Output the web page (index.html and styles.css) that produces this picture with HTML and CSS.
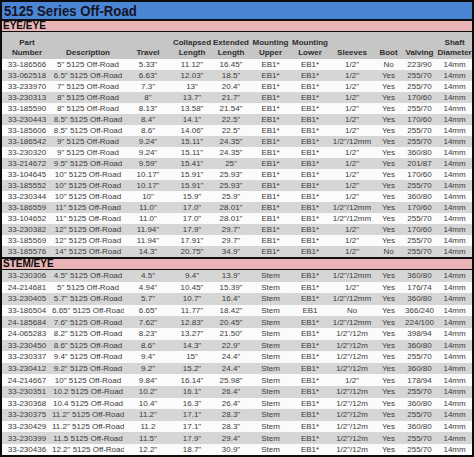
FILE: index.html
```html
<!DOCTYPE html>
<html>
<head>
<meta charset="utf-8">
<title>5125 Series Off-Road</title>
<link rel="stylesheet" href="styles.css">
</head>
<body>
<div class="sheet">
  <div class="title"><span class="title-text">5125 Series Off-Road</span></div>
  <table class="grid">
    <colgroup>
      <col class="c-part"><col class="c-desc"><col class="c-travel"><col class="c-coll"><col class="c-ext"><col class="c-up"><col class="c-low"><col class="c-sleeve"><col class="c-boot"><col class="c-valv"><col class="c-shaft">
    </colgroup>
    <thead>
      <tr class="band band-first"><td colspan="11">EYE/EYE</td></tr>
      <tr class="head">
        <th>Part<br>Number</th><th>Description</th><th>Travel</th><th>Collapsed<br>Length</th><th>Extended<br>Length</th><th>Mounting<br>Upper</th><th>Mounting<br>Lower</th><th>Sleeves</th><th>Boot</th><th>Valving</th><th>Shaft<br>Diameter</th>
      </tr>
    </thead>
    <tbody class="eye">
      <tr><td>33-186566</td><td>5" 5125 Off-Road</td><td>5.33"</td><td>11.12"</td><td>16.45"</td><td>EB1*</td><td>EB1*</td><td>1/2"</td><td>No</td><td>223/90</td><td>14mm</td></tr>
      <tr><td>33-062518</td><td>6.5" 5125 Off-Road</td><td>6.63"</td><td>12.03"</td><td>18.5"</td><td>EB1*</td><td>EB1*</td><td>1/2"</td><td>Yes</td><td>255/70</td><td>14mm</td></tr>
      <tr><td>33-233970</td><td>7" 5125 Off-Road</td><td>7.3"</td><td>13"</td><td>20.4"</td><td>EB1*</td><td>EB1*</td><td>1/2"</td><td>Yes</td><td>255/70</td><td>14mm</td></tr>
      <tr><td>33-230313</td><td>8" 5125 Off-Road</td><td>8"</td><td>13.7"</td><td>21.7"</td><td>EB1*</td><td>EB1*</td><td>1/2"</td><td>Yes</td><td>170/60</td><td>14mm</td></tr>
      <tr><td>33-185590</td><td>8" 5125 Off-Road</td><td>8.13"</td><td>13.58"</td><td>21.54"</td><td>EB1*</td><td>EB1*</td><td>1/2"</td><td>Yes</td><td>255/70</td><td>14mm</td></tr>
      <tr><td>33-230443</td><td>8.5" 5125 Off-Road</td><td>8.4"</td><td>14.1"</td><td>22.5"</td><td>EB1*</td><td>EB1*</td><td>1/2"</td><td>Yes</td><td>170/60</td><td>14mm</td></tr>
      <tr><td>33-185606</td><td>8.5" 5125 Off-Road</td><td>8.6"</td><td>14.06"</td><td>22.5"</td><td>EB1*</td><td>EB1*</td><td>1/2"</td><td>Yes</td><td>255/70</td><td>14mm</td></tr>
      <tr><td>33-186542</td><td>9" 5125 Off-Road</td><td>9.24"</td><td>15.11"</td><td>24.35"</td><td>EB1*</td><td>EB1*</td><td>1/2"/12mm</td><td>Yes</td><td>255/70</td><td>14mm</td></tr>
      <tr><td>33-230320</td><td>9" 5125 Off-Road</td><td>9.24"</td><td>15.11"</td><td>24.35"</td><td>EB1*</td><td>EB1*</td><td>1/2"</td><td>Yes</td><td>360/80</td><td>14mm</td></tr>
      <tr><td>33-214672</td><td>9.5" 5125 Off-Road</td><td>9.59"</td><td>15.41"</td><td>25"</td><td>EB1*</td><td>EB1*</td><td>1/2"</td><td>Yes</td><td>201/87</td><td>14mm</td></tr>
      <tr><td>33-104645</td><td>10" 5125 Off-Road</td><td>10.17"</td><td>15.91"</td><td>25.93"</td><td>EB1*</td><td>EB1*</td><td>1/2"</td><td>Yes</td><td>170/60</td><td>14mm</td></tr>
      <tr><td>33-185552</td><td>10" 5125 Off-Road</td><td>10.17"</td><td>15.91"</td><td>25.93"</td><td>EB1*</td><td>EB1*</td><td>1/2"</td><td>Yes</td><td>255/70</td><td>14mm</td></tr>
      <tr><td>33-230344</td><td>10" 5125 Off-Road</td><td>10"</td><td>15.9"</td><td>25.9"</td><td>EB1*</td><td>EB1*</td><td>1/2"</td><td>Yes</td><td>360/80</td><td>14mm</td></tr>
      <tr><td>33-186559</td><td>11" 5125 Off-Road</td><td>11.0"</td><td>17.0"</td><td>28.01"</td><td>EB1*</td><td>EB1*</td><td>1/2"/12mm</td><td>Yes</td><td>170/60</td><td>14mm</td></tr>
      <tr><td>33-104652</td><td>11" 5125 Off-Road</td><td>11.0"</td><td>17.0"</td><td>28.01"</td><td>EB1*</td><td>EB1*</td><td>1/2"/12mm</td><td>Yes</td><td>255/70</td><td>14mm</td></tr>
      <tr><td>33-230382</td><td>12" 5125 Off-Road</td><td>11.94"</td><td>17.9"</td><td>29.7"</td><td>EB1*</td><td>EB1*</td><td>1/2"</td><td>Yes</td><td>170/60</td><td>14mm</td></tr>
      <tr><td>33-185569</td><td>12" 5125 Off-Road</td><td>11.94"</td><td>17.91"</td><td>29.7"</td><td>EB1*</td><td>EB1*</td><td>1/2"</td><td>Yes</td><td>255/70</td><td>14mm</td></tr>
      <tr><td>33-185576</td><td>14" 5125 Off-Road</td><td>14.3"</td><td>20.75"</td><td>34.9"</td><td>EB1*</td><td>EB1*</td><td>1/2"</td><td>No</td><td>255/70</td><td>14mm</td></tr>
    </tbody>
    <tbody class="stem">
      <tr class="band band-mid"><td colspan="11">STEM/EYE</td></tr>
      <tr><td>33-230306</td><td>4.5" 5125 Off-Road</td><td>4.5"</td><td>9.4"</td><td>13.9"</td><td>Stem</td><td>EB1*</td><td>1/2"/12mm</td><td>Yes</td><td>360/80</td><td>14mm</td></tr>
      <tr><td>24-214681</td><td>5" 5125 Off-Road</td><td>4.94"</td><td>10.45"</td><td>15.39"</td><td>Stem</td><td>EB1*</td><td>1/2"</td><td>Yes</td><td>176/74</td><td>14mm</td></tr>
      <tr><td>33-230405</td><td>5.7" 5125 Off-Road</td><td>5.7"</td><td>10.7"</td><td>16.4"</td><td>Stem</td><td>EB1*</td><td>1/2"/12mm</td><td>Yes</td><td>360/80</td><td>14mm</td></tr>
      <tr><td>33-186504</td><td>6.65" 5125 Off-Road</td><td>6.65"</td><td>11.77"</td><td>18.42"</td><td>Stem</td><td>EB1</td><td>No</td><td>Yes</td><td>366/240</td><td>14mm</td></tr>
      <tr><td>24-185684</td><td>7.6" 5125 Off-Road</td><td>7.62"</td><td>12.83"</td><td>20.45"</td><td>Stem</td><td>EB1*</td><td>1/2"/12mm</td><td>Yes</td><td>224/100</td><td>14mm</td></tr>
      <tr><td>24-065283</td><td>8.2" 5125 Off-Road</td><td>8.23"</td><td>13.27"</td><td>21.50"</td><td>Stem</td><td>EB1*</td><td>1/2"/12m</td><td>Yes</td><td>398/94</td><td>14mm</td></tr>
      <tr><td>33-230450</td><td>8.6" 5125 Off-Road</td><td>8.6"</td><td>14.3"</td><td>22.9"</td><td>Stem</td><td>EB1*</td><td>1/2"/12m</td><td>Yes</td><td>360/80</td><td>14mm</td></tr>
      <tr><td>33-230337</td><td>9.4" 5125 Off-Road</td><td>9.4"</td><td>15"</td><td>24.4"</td><td>Stem</td><td>EB1*</td><td>1/2"/12m</td><td>Yes</td><td>255/70</td><td>14mm</td></tr>
      <tr><td>33-230412</td><td>9.2" 5125 Off-Road</td><td>9.2"</td><td>15.2"</td><td>24.4"</td><td>Stem</td><td>EB1*</td><td>1/2"/12m</td><td>Yes</td><td>360/80</td><td>14mm</td></tr>
      <tr><td>24-214667</td><td>10" 5125 Off-Road</td><td>9.84"</td><td>16.14"</td><td>25.98"</td><td>Stem</td><td>EB1*</td><td>1/2"</td><td>Yes</td><td>178/94</td><td>14mm</td></tr>
      <tr><td>33-230351</td><td>10.2 5125 Off-Road</td><td>10.2"</td><td>16.1"</td><td>26.4"</td><td>Stem</td><td>EB1*</td><td>1/2"/12m</td><td>Yes</td><td>255/70</td><td>14mm</td></tr>
      <tr><td>33-230368</td><td>10.4 5125 Off-Road</td><td>10.4"</td><td>16.3"</td><td>26.4"</td><td>Stem</td><td>EB1*</td><td>1/2"/12m</td><td>Yes</td><td>360/80</td><td>14mm</td></tr>
      <tr><td>33-230375</td><td>11.2" 5125 Off-Road</td><td>11.2"</td><td>17.1"</td><td>28.3"</td><td>Stem</td><td>EB1*</td><td>1/2"/12m</td><td>Yes</td><td>255/70</td><td>14mm</td></tr>
      <tr><td>33-230429</td><td>11.2" 5125 Off-Road</td><td>11.2</td><td>17.1"</td><td>28.3"</td><td>Stem</td><td>EB1*</td><td>1/2"/12m</td><td>Yes</td><td>360/80</td><td>14mm</td></tr>
      <tr><td>33-230399</td><td>11.5 5125 Off-Road</td><td>11.5"</td><td>17.9"</td><td>29.4"</td><td>Stem</td><td>EB1*</td><td>1/2"/12m</td><td>Yes</td><td>255/70</td><td>14mm</td></tr>
      <tr><td>33-230436</td><td>12.2" 5125 Off-Road</td><td>12.2"</td><td>18.7"</td><td>30.9"</td><td>Stem</td><td>EB1*</td><td>1/2"/12m</td><td>Yes</td><td>255/70</td><td>14mm</td></tr>
    </tbody>
  </table>
</div>
</body>
</html>
```

FILE: styles.css
```css
html, body {
  margin: 0;
  padding: 0;
  background: #ffffff;
}

.sheet {
  width: 470px;
  height: 453px;
  border: 2px solid #0c0c0c;
  background: #ffffff;
  overflow: hidden;
  font-family: "Liberation Sans", Arial, sans-serif;
}

.title {
  height: 17px;
  background: #4b86d4;
  border-bottom: 2px solid #101010;
  display: flex;
  align-items: center;
  padding-left: 2px;
  overflow: hidden;
}

.title-text {
  display: inline-block;
  font-size: 15px;
  font-weight: bold;
  color: #141428;
  line-height: 17px;
  transform: scaleX(0.88);
  transform-origin: left center;
  white-space: nowrap;
}

.grid {
  width: 470px;
  table-layout: fixed;
  border-collapse: separate;
  border-spacing: 0;
  font-size: 8px;
  color: #3c3c3c;
}

.c-part { width: 50px; }
.c-desc { width: 72px; }
.c-travel { width: 48px; }
.c-coll { width: 40px; }
.c-ext { width: 38px; }
.c-up { width: 41px; }
.c-low { width: 38px; }
.c-sleeve { width: 46px; }
.c-boot { width: 27px; }
.c-valv { width: 35px; }
.c-shaft { width: 35px; }

.grid td,
.grid th {
  padding: 0;
  text-align: center;
  white-space: nowrap;
  overflow: hidden;
  line-height: 9px;
}

.grid .band td {
  background: #e9b5b6;
  color: #0c0c0c;
  font-weight: bold;
  font-size: 10px;
  text-align: left;
  padding-left: 1px;
  line-height: 10px;
  overflow: visible;
}

.band-first td {
  height: 9px;
  border-bottom: 1px solid #101010;
}

.band-mid td {
  height: 10px;
  border-top: 2px solid #101010;
  border-bottom: 1px solid #101010;
}

.head th {
  height: 26px;
  background: #c6c6c6;
  color: #2e2e2e;
  font-weight: bold;
  font-size: 8px;
  vertical-align: bottom;
  padding-bottom: 1px;
  line-height: 10px;
}

.eye tr { height: 11px; }
.stem tr { height: 11.6px; }
.stem tr.band { height: 13px; }

.eye tr:nth-child(odd) td { background: #fbfbfb; }
.eye tr:nth-child(even) td { background: #d6d6d6; }
.stem tr:nth-child(even) td { background: #d6d6d6; }
.stem tr:nth-child(odd) td { background: #fbfbfb; }
.stem tr.band td { background: #e9b5b6; }
```
